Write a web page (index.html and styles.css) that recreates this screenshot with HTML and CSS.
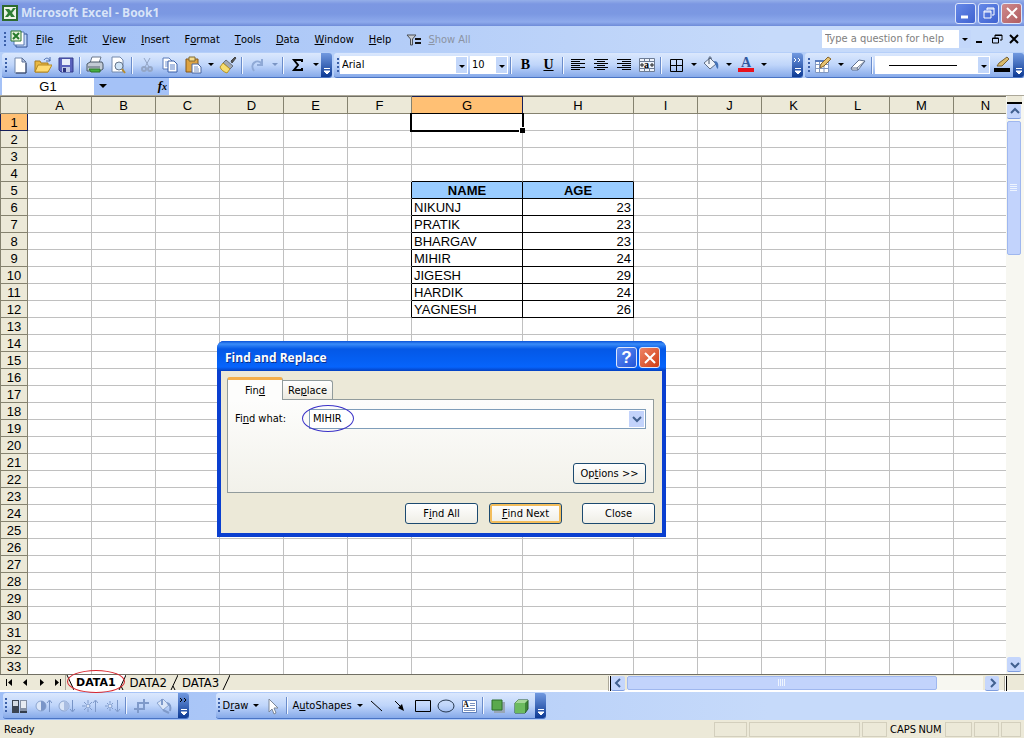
FILE: index.html
```html
<!DOCTYPE html>
<html lang="en">
<head>
	<meta charset="utf-8">
	<title>Microsoft Excel - Book1</title>
	<link rel="stylesheet" href="styles.css">
</head>

<body>
<!-- title bar -->
<div class="titlebar">
	<svg class="app-icon" width="16" height="16"><rect x="1" y="1" width="14" height="14" fill="#eef4e6" stroke="#2d6a2d" stroke-width="2"/><path d="M3 4h4l2 2 2-3h3l-4 5 3 4h-4L8 10l-2 2H3l3-4z" fill="#2f7f35"/></svg>
	<span class="title">Microsoft Excel - Book1</span>
	<button class="win" aria-label="Minimize"><svg width="18" height="18"><path d="M4 13h7" stroke="#fff" stroke-width="3"/></svg></button>
	<button class="win" aria-label="Restore"><svg width="18" height="18"><path d="M7 6V4h7v7h-2M7 5h7M4 7h7v7H4zM4 8h7" fill="none" stroke="#fff"/></svg></button>
	<button class="win win-close" aria-label="Close"><svg width="18" height="18"><path d="M4 4l10 10M14 4L4 14" stroke="#fff" stroke-width="2"/></svg></button>
</div>

<!-- menu -->
<div class="menubar">
	<span class="grip"></span>
	<svg class="book-icon" width="18" height="18"><path d="M6 4h11v13H6z" fill="#c5d9f7" stroke="#2e4f91"/><path d="M4 2h10v13H4z" fill="#fff" stroke="#5778b3"/><path d="M1 1h10v10H1z" fill="#e7f1dd" stroke="#2d762e"/><path d="M3 3l6 6M9 3L3 9" stroke="#267a2b" stroke-width="2"/></svg>
	<button class="menu"><u>F</u>ile</button>
	<button class="menu"><u>E</u>dit</button>
	<button class="menu"><u>V</u>iew</button>
	<button class="menu"><u>I</u>nsert</button>
	<button class="menu">F<u>o</u>rmat</button>
	<button class="menu"><u>T</u>ools</button>
	<button class="menu"><u>D</u>ata</button>
	<button class="menu"><u>W</u>indow</button>
	<button class="menu"><u>H</u>elp</button>
	<button class="menu showall" disabled><svg width="16" height="12"><path d="M1 1h9L6.500 5v6h-2V5z" fill="#c8cdd4" stroke="#4a4f55"/><path d="M9 5h6M9 9h6" stroke="#111" stroke-width="2"/></svg><span><u>S</u>how All</span></button>
	<div class="ask">
		<input type="text" aria-label="Help question" placeholder="Type a question for help">
		<button aria-label="Recent questions"><svg width="10" height="16"><path d="M2 7h6l-3 3z"/></svg></button>
	</div>
	<button class="doc" aria-label="Minimize workbook"><svg width="12" height="12"><path d="M2 9h6" stroke="#000" stroke-width="2"/></svg></button>
	<button class="doc" aria-label="Restore workbook"><svg width="12" height="12"><path d="M4 5V2h7v5H9M4 2.500h7M1.500 5v5h6V5zM1 5.500h7" fill="none" stroke="#000"/></svg></button>
	<button class="doc" aria-label="Close workbook"><svg width="12" height="12"><path d="M2 2l8 8M10 2l-8 8" stroke="#000" stroke-width="2"/></svg></button>
</div>

<!-- toolbars -->
<div class="toolbars">
	<div class="toolbar">
		<span class="grip"></span>
		<button class="tool" aria-label="New"><svg width="18" height="18"><path d="M4 2h7l4 4v11H4z" fill="#fff" stroke="#7288ad"/><path d="M11 2v4h4z" fill="#bccbe6" stroke="#5a6f96"/><path d="M15 7v10H5" fill="none" stroke="#2c3d60"/></svg></button>
		<button class="tool" aria-label="Open"><svg width="18" height="18"><path d="M1 5h5l1 2h7v9H1z" fill="#e9b843" stroke="#a77b1c"/><path d="M4 9h14l-4 7H1z" fill="#ffdb72" stroke="#b58a24"/><path d="M10 4c2-3 5-2 6 1M16 1v4h-4" fill="none" stroke="#4a6cae"/></svg></button>
		<button class="tool" aria-label="Save"><svg width="18" height="18"><path d="M2 2h14v14H4l-2-2z" fill="#5a62bd" stroke="#343c8c"/><path d="M5 3h8v6H5z" fill="#e7ecfa"/><path d="M5 11h8v5H5z" fill="#bfc9e8"/><path d="M6 12h3v4H6z" fill="#2c337d"/></svg></button>
		<span class="sep"></span>
		<button class="tool" aria-label="Print"><svg width="18" height="18"><path d="M6 1h9l-2 6H4z" fill="#fff" stroke="#6a788c"/><path d="M1 8l3-2h12l1 2v5l-3 2H1z" fill="#c3cbd5" stroke="#4a5868"/><path d="M2 11h12" stroke="#55606e"/><path d="M3 13h11v3H5z" fill="#45b041" stroke="#2d752b"/></svg></button>
		<button class="tool" aria-label="Print Preview"><svg width="18" height="18"><path d="M3 1h8l3 3v12H3z" fill="#fff" stroke="#7388ab"/><circle cx="10" cy="10" r="4" fill="#cfe4f7" stroke="#66758a"/><path d="M13 13l3 4" stroke="#b58b2e" stroke-width="2"/></svg></button>
		<span class="sep"></span>
		<button class="tool" aria-label="Cut"><svg width="18" height="18"><path d="M6 2l5 9M12 2l-5 9" stroke="#94a6c6"/><circle cx="6" cy="13" r="2" fill="none" stroke="#94a6c6" stroke-width="2"/><circle cx="12" cy="13" r="2" fill="none" stroke="#94a6c6" stroke-width="2"/></svg></button>
		<button class="tool" aria-label="Copy"><svg width="18" height="18"><path d="M2 2h6l3 3v8H2z" fill="#fff" stroke="#5a7ab8"/><path d="M4 6h5M4 8h5M4 10h5" stroke="#7b9ad4"/><path d="M7 5h6l3 3v8H7z" fill="#fff" stroke="#3b5fa6"/><path d="M9 9h5M9 11h5M9 13h5" stroke="#5f83c9"/></svg></button>
		<button class="tool" aria-label="Paste"><svg width="18" height="18"><path d="M2 3h12v13H2z" fill="#dda343" stroke="#85591a"/><path d="M5 1h6v4H5z" fill="#f5dc8e" stroke="#806a32"/><path d="M8 8h6l3 3v6H8z" fill="#fff" stroke="#4a67a0"/><path d="M10 11h4M10 13h5M10 15h5" stroke="#7892c4"/></svg></button>
		<button class="drop" aria-label="Paste options"><svg width="7" height="4"><path d="M1 0h6L4 3z"/></svg></button>
		<button class="tool" aria-label="Format Painter"><svg width="18" height="18"><path d="M12 5l4-4 1 1-4 5z" fill="#555" stroke="#444"/><path d="M7 4l7 6-3 3-7-6z" fill="#a1a8b4" stroke="#66707e"/><path d="M4 7l7 6-3 4c-3-1-6-3-7-6z" fill="#f7dd6e" stroke="#b49328"/></svg></button>
		<span class="sep"></span>
		<button class="tool" disabled aria-label="Redo"><svg width="18" height="18"><path d="M6 15c-5-7 3-13 8-7M14 3v6H9" fill="none" stroke="#8fa9d6" stroke-width="2"/></svg></button>
		<button class="drop" disabled aria-label="Redo list"><svg width="7" height="4"><path d="M1 0h6L4 3z" fill="#7b95c4"/></svg></button>
		<span class="sep"></span>
		<button class="tool" aria-label="AutoSum"><svg width="18" height="18"><path d="M13 6V4H5l4 5-4 5h8v-2" fill="none" stroke="#000" stroke-width="2"/></svg></button>
		<button class="drop" aria-label="AutoSum functions"><svg width="7" height="4"><path d="M1 0h6L4 3z"/></svg></button>
		<button class="more" aria-label="Toolbar options"><svg width="11" height="22"><path d="M3 14.500h6M3 17h6l-3 3z" fill="#fff" stroke="#fff"/></svg></button>
	</div>

	<div class="toolbar toolbar-format">
		<span class="grip"></span>
		<select class="font" aria-label="Font"><option>Arial</option></select>
		<select class="size" aria-label="Font size"><option>10</option></select>
		<span class="sep"></span>
		<button class="tool letter"><b>B</b></button>
		<button class="tool letter"><u>U</u></button>
		<span class="sep"></span>
		<button class="tool" aria-label="Align left"><svg width="18" height="18"><path d="M2 3.500h14M2 5.500h9M2 7.500h14M2 9.500h9M2 11.500h14M2 13.500h9" stroke="#000"/></svg></button>
		<button class="tool" aria-label="Center"><svg width="18" height="18"><path d="M2 3.500h14M5 5.500h8M2 7.500h14M5 9.500h8M2 11.500h14M5 13.500h8" stroke="#000"/></svg></button>
		<button class="tool" aria-label="Align right"><svg width="18" height="18"><path d="M2 3.500h14M7 5.500h9M2 7.500h14M7 9.500h9M2 11.500h14M7 13.500h9" stroke="#000"/></svg></button>
		<button class="tool" aria-label="Merge and center"><svg width="18" height="18"><path d="M1.500 2.500h15v13h-15zM1 5.500h16M1 12.500h16M6.500 2v3M11.500 2v3M6.500 13v3M11.500 13v3" fill="#eef3fb" stroke="#6d7c94"/><path d="M2 9h4M4 7v4M12 9h4M14 7v4" stroke="#222"/><text x="6" y="12" font-size="10" font-weight="bold" font-family="Liberation Serif">a</text></svg></button>
		<span class="sep"></span>
		<button class="tool" aria-label="Borders"><svg width="18" height="18"><path d="M3.500 3.500h12v12h-12zM9.500 3v13M3 9.500h13" fill="none" stroke="#000"/></svg></button>
		<button class="drop" aria-label="Border styles"><svg width="7" height="4"><path d="M1 0h6L4 3z"/></svg></button>
		<button class="tool" aria-label="Fill color"><svg width="18" height="18"><path d="M2 7l6-5 6 6-6 5z" fill="#edf2fa" stroke="#5f6f88"/><path d="M7 8V2c0-2 3-1 2 1" fill="none" stroke="#445268"/><path d="M12 5c4 0 5 3 4 8-2-1-2-4-3-5z" fill="#4472b8"/></svg></button>
		<button class="drop" aria-label="Fill colors"><svg width="7" height="4"><path d="M1 0h6L4 3z"/></svg></button>
		<button class="tool" aria-label="Font color"><svg width="18" height="18"><text x="4" y="11" font-size="14" font-weight="bold" fill="#31589f" font-family="Liberation Serif">A</text><path d="M1 12h16v4H1z" fill="#e8101c"/></svg></button>
		<button class="drop" aria-label="Font colors"><svg width="7" height="4"><path d="M1 0h6L4 3z"/></svg></button>
		<button class="more" aria-label="More formatting"><svg width="11" height="22"><path d="M2 4l2 2-2 2M6 4l2 2-2 2" fill="none" stroke="#fff"/><path d="M3 14.500h6M3 17h6l-3 3z" fill="#fff" stroke="#fff"/></svg></button>
	</div>

	<div class="toolbar toolbar-border">
		<span class="grip"></span>
		<button class="tool" aria-label="Draw border"><svg width="18" height="18"><path d="M1.500 4.500h13v12h-13zM1 8.500h13M1 12.500h13M5.500 4v12M10 4v12" fill="#fff" stroke="#8298c0"/><path d="M1 4h13v2H1z" fill="#587bbd"/><path d="M6 12l1-4 7-7 3 2-7 7z" fill="#e6c270" stroke="#86642a"/></svg></button>
		<button class="drop" aria-label="Draw border options"><svg width="7" height="4"><path d="M1 0h6L4 3z"/></svg></button>
		<button class="tool" aria-label="Erase border"><svg width="18" height="18"><path d="M2 12l8-8 6 1-7 9H3z" fill="#fff" stroke="#5f6f8c"/><path d="M2 12h6l8-7M8 12l1 2" fill="none" stroke="#5f6f8c"/></svg></button>
		<span class="sep"></span>
		<select class="line" aria-label="Line style"><option>&nbsp;</option></select>
		<button class="tool" aria-label="Line color"><svg width="18" height="18"><path d="M4 10l2-3 8-6 2 2-7 7z" fill="#d9ba6a" stroke="#7a6234"/><path d="M1 12h16v4H1z"/></svg></button>
		<button class="more" aria-label="More border tools"><svg width="11" height="22"><path d="M3 14.500h6M3 17h6l-3 3z" fill="#fff" stroke="#fff"/></svg></button>
	</div>
</div>

<!-- formula bar -->
<div class="formulabar">
	<input class="namebox" type="text" aria-label="Name box" value="G1">
	<div class="fx">
		<button aria-label="Named cells"><svg width="9" height="5"><path d="M1 0h8L5 4z"/></svg></button>
		<button class="fx-btn" aria-label="Insert function"><i>f<small>x</small></i></button>
	</div>
	<input class="formula" type="text" aria-label="Formula">
</div>

<!-- worksheet -->
<div class="work">
	<div class="sheet">
		<table class="grid" id="grid"></table>
	</div>
	<div class="vscroll">
		<span class="split"></span>
		<button class="arrow" aria-label="Scroll up"><svg width="13" height="13"><path d="M3 8l4-4 4 4" fill="none" stroke="#41608f" stroke-width="2"/></svg></button>
		<div class="thumb"><svg width="8" height="8"><path d="M0 .5h7M0 2.500h7M0 4.500h7M0 6.500h7" stroke="#eef4fe"/></svg></div>
		<button class="arrow last" aria-label="Scroll down"><svg width="13" height="13"><path d="M3 5l4 4 4-4" fill="none" stroke="#41608f" stroke-width="2"/></svg></button>
	</div>
</div>

<div class="tabstrip">
	<div class="nav">
		<button aria-label="First sheet"><svg width="9" height="9"><path d="M1 1h1v7H1zM7 1v7L3 4.500z"/></svg></button>
		<button aria-label="Previous sheet"><svg width="9" height="9"><path d="M6 1v7L2 4.500z"/></svg></button>
		<button aria-label="Next sheet"><svg width="9" height="9"><path d="M3 1v7l4-3.500z"/></svg></button>
		<button aria-label="Last sheet"><svg width="9" height="9"><path d="M2 1v7l4-3.500zM7 1h1v7H7z"/></svg></button>
	</div>
	<svg class="slant" width="8" height="15"><path d="M1 0h7v15z" fill="#fff"/><path d="M1 0l7 15" stroke="#000"/></svg>
	<button class="sheettab current">DATA1</button>
	<svg class="slant" width="8" height="15"><path d="M0 0h8L1 15H0z" fill="#fff"/><path d="M8 0L1 15M3 11l2 4" stroke="#000"/></svg>
	<button class="sheettab">DATA2</button>
	<svg class="slant" width="8" height="15"><path d="M8 0L1 15M3 11l2 4" stroke="#000"/></svg>
	<button class="sheettab">DATA3</button>
	<svg class="slant" width="8" height="15"><path d="M8 0L1 15" stroke="#000"/></svg>
	<div class="hscroll">
		<span class="vsplit"></span>
		<button class="arrow" aria-label="Scroll left"><svg width="13" height="13"><path d="M8 3L4 7l4 4" fill="none" stroke="#41608f" stroke-width="2"/></svg></button>
		<div class="track"><div class="thumb"><svg width="8" height="8"><path d="M.5 0v7M2.500 0v7M4.500 0v7M6.500 0v7" stroke="#eef4fe"/></svg></div></div>
		<button class="arrow" aria-label="Scroll right"><svg width="13" height="13"><path d="M5 3l4 4-4 4" fill="none" stroke="#41608f" stroke-width="2"/></svg></button>
		<span class="vsplit end"></span>
	</div>
	<span class="mark mark-tab"></span>
</div>

<!-- picture and drawing toolbars -->
<div class="drawbars">
	<div class="toolbar">
		<span class="grip"></span>
		<button class="tool" aria-label="Color"><svg width="18" height="18"><path d="M1 3h7v13H1z" fill="#3b4453"/><path d="M2 4h5v5H2z" fill="#d5dbe4"/><path d="M9 3h7v13H9z" fill="#8591a5"/><path d="M10 4h5v7h-5z" fill="#e8ecf2"/><path d="M9 14h7v2H9z" fill="#333d4d"/></svg></button>
		<button class="tool" disabled aria-label="More contrast"><svg width="18" height="18"><circle cx="7" cy="9" r="5" fill="#dbe6f8" stroke="#8ba4cf"/><path d="M7 4a5 5 0 0 1 0 10z" fill="#7995c8"/><path d="M15.500 15V4M13 6l2.500-3L18 6" fill="none" stroke="#7794c7"/></svg></button>
		<button class="tool" disabled aria-label="Less contrast"><svg width="18" height="18"><circle cx="7" cy="9" r="5" fill="#dbe6f8" stroke="#8ba4cf"/><path d="M7 4a5 5 0 0 1 0 10z" fill="#a9bde2"/><path d="M15.500 3v11M13 12l2.500 3 2.500-3" fill="none" stroke="#7794c7"/></svg></button>
		<button class="tool" disabled aria-label="More brightness"><svg width="18" height="18"><circle cx="8" cy="9" r="2" fill="#dbe6f8" stroke="#7f9aca"/><path d="M8 3v3M8 12v3M2 9h3M4 5l2 2M4 13l2-2M12 13l-2-2M12 5l-2 2M15.500 15V4M13 6l2.500-3L18 6" fill="none" stroke="#7f9aca"/></svg></button>
		<button class="tool" disabled aria-label="Less brightness"><svg width="18" height="18"><circle cx="7" cy="9" r="2" fill="#dbe6f8" stroke="#7f9aca"/><path d="M7 4v2M7 12v2M2 9h2M4 6l1 1M4 12l1-1M10 12l-1-1M10 6L9 7M14.500 3v11M12 12l2.500 3 2.500-3" fill="none" stroke="#7f9aca"/></svg></button>
		<span class="sep"></span>
		<button class="tool" disabled aria-label="Crop"><svg width="18" height="18"><path d="M6 16V6h11M2 12h10V2" fill="none" stroke="#7f9aca" stroke-width="2"/></svg></button>
		<button class="tool" disabled aria-label="Format picture"><svg width="18" height="18"><path d="M2 6l6-4 6 6-6 5z" fill="#dbe6f8" stroke="#8ba4cf"/><path d="M7 8V2M12 6c3 1 4 4 3 8M8 13l6 3" fill="none" stroke="#7f9aca" stroke-width="2"/></svg></button>
		<button class="more" aria-label="More picture tools"><svg width="11" height="22"><path d="M2 3l2 2-2 2M6 3l2 2-2 2" fill="none" stroke="#000"/><path d="M3 14.500h6M3 17h6l-3 3z" fill="#fff" stroke="#fff"/></svg></button>
	</div>
	<div class="toolbar toolbar-draw">
		<span class="grip"></span>
		<button class="wordtool draw"><span>D<u>r</u>aw</span><svg width="7" height="4"><path d="M1 0h6L4 3z"/></svg></button>
		<button class="tool" aria-label="Select objects"><svg width="18" height="18"><path d="M5 2v13l3-3 2 5 2-1-2-5h4z" fill="#fff" stroke="#7a8698"/></svg></button>
		<span class="sep"></span>
		<button class="wordtool shapes"><span>A<u>u</u>toShapes</span><svg width="7" height="4"><path d="M1 0h6L4 3z"/></svg></button>
		<button class="tool" aria-label="Line"><svg width="18" height="18"><path d="M3 4l11 10" stroke="#000"/></svg></button>
		<button class="tool" aria-label="Arrow"><svg width="18" height="18"><path d="M4 4l7 7" stroke="#000"/><path d="M13 14L7 11l4-4z"/></svg></button>
		<button class="tool" aria-label="Rectangle"><svg width="18" height="18"><path d="M1.500 3.500h15v11h-15z" fill="none" stroke="#000"/></svg></button>
		<button class="tool" aria-label="Oval"><svg width="18" height="18"><ellipse cx="9" cy="9" rx="8" ry="6" fill="none" stroke="#26384f"/></svg></button>
		<button class="tool" aria-label="Text box"><svg width="18" height="18"><path d="M2.500 3.500h14v12h-14z" fill="#fff" stroke="#5e80bd"/><path d="M10 6.500h5M10 8.500h5M4 11.500h11M4 13.500h11" stroke="#7890bd"/><text x="3" y="10" font-size="8" font-weight="bold" font-family="Liberation Serif">A</text></svg></button>
		<span class="sep"></span>
		<button class="tool" aria-label="Shadow"><svg width="18" height="18"><path d="M5 5h11v11H5z" fill="#98a6b6"/><path d="M3 3h10v10H3z" fill="#5aa94d" stroke="#2c6e2a"/></svg></button>
		<button class="tool" aria-label="3-D"><svg width="18" height="18"><path d="M3 6l3-3h10v9l-3 4H3z" fill="#3d8638" stroke="#275a25"/><path d="M3 6h10v10H3z" fill="#6cbb5f"/><path d="M3 6l3-3h10l-3 3z" fill="#a6d89a"/></svg></button>
		<button class="more" aria-label="More drawing tools"><svg width="11" height="22"><path d="M3 14.500h6M3 17h6l-3 3z" fill="#fff" stroke="#fff"/></svg></button>
	</div>
</div>

<div class="status">
	<span class="ready">Ready</span>
	<span class="pane wide"></span>
	<span class="pane message"></span>
	<span class="pane"></span>
	<span class="pane key">CAPS</span>
	<span class="pane key">NUM</span>
	<span class="pane scrl"></span>
	<span class="pane"></span>
	<span class="pane corner"></span>
</div>

<!-- find dialog -->
<div class="dialog" role="dialog" aria-labelledby="dlg-title">
	<div class="dlg-title">
		<span id="dlg-title">Find and Replace</span>
		<button class="win help" aria-label="Help">?</button>
		<button class="win red" aria-label="Close dialog"><svg width="18" height="18"><path d="M4 4l10 10M14 4L4 14" stroke="#fff" stroke-width="2"/></svg></button>
	</div>
	<div class="dlg-body">
		<div class="dlg-tabs">
			<button class="dlg-tab on">Fin<u>d</u></button>
			<button class="dlg-tab">Re<u>p</u>lace</button>
		</div>
		<div class="panel">
			<div class="field">
				<label for="what">Fi<u>n</u>d what:</label>
				<div class="combo">
					<input id="what" type="text" value="MIHIR">
					<button aria-label="Recent searches"><svg width="13" height="14"><path d="M3 5l4 4 4-4" fill="none" stroke="#41608f" stroke-width="2"/></svg></button>
					<span class="mark mark-find"></span>
				</div>
			</div>
			<button class="btn">Op<u>t</u>ions &gt;&gt;</button>
		</div>
		<div class="actions">
			<button class="btn">F<u>i</u>nd All</button>
			<button class="btn default"><u>F</u>ind Next</button>
			<button class="btn close">Close</button>
		</div>
	</div>
</div>

<script src="sheet.js"></script>
</body>
</html>
```
FILE: styles.css
```css
* {box-sizing: border-box}
html, body {height: 100%}
body {margin: 0; display: flex; flex-direction: column; overflow: hidden; background: #ece9d8; color: #000; font: 11px/14px "DejaVu Sans Condensed", "Noto Sans", sans-serif}
button, input, select {margin: 0; padding: 0; border: 0; border-radius: 0; background: none; color: inherit; font: inherit}
button {display: flex; align-items: center; justify-content: center; white-space: nowrap}
svg {display: block; flex: none}

/* title bar */
.titlebar {flex: none; display: flex; align-items: center; gap: 2px; height: 26px; padding: 0 2px; background: linear-gradient(#95afe9 0, #7c97e2 4px, #7b98e2 14px, #8eaaec 22px, #6e8bd8)}
.title {flex: 1; color: #d8e4f8; font: bold 12px/18px "Open Sans", sans-serif}
.app-icon {margin-right: 1px}
.win {width: 21px; height: 21px; border: 1px solid #dde6fb; border-radius: 3px; background: linear-gradient(135deg, #6689e8, #3f62d0)}
.win-close {background: linear-gradient(135deg, #cf8a8c, #b05c60)}

/* menu */
.menubar {flex: none; display: flex; align-items: center; height: 26px; padding: 0 2px 0 4px; background: linear-gradient(90deg, #a0bff6, #c6dafa 75%)}
.grip {flex: none; width: 3px; height: 15px; background: repeating-linear-gradient(#3a5fa8 0, #3a5fa8 2px, transparent 2px, transparent 4px) 0 0 / 2px 100% no-repeat}
.book-icon {margin: 0 0 0 3px}
.menu {padding: 1px 7px 0 8px; height: 20px}
.showall {gap: 6px; color: #8b93a3}
.ask {display: flex; width: 149px; height: 18px; margin-left: auto; background: #fff}
.ask input {flex: 1; min-width: 0; padding-left: 3px}
.ask input::placeholder {color: #808080; opacity: 1}
.ask button {width: 12px; background: #c3d7fa}
.doc {width: 17px; height: 18px}

/* toolbars */
.toolbars {flex: none; display: flex; gap: 2px; height: 26px; padding: 1px 0 0 2px; background: #b5cff9}
.toolbar {display: flex; align-items: center; height: 25px; padding-left: 3px; border-bottom: 1px solid #4a74c4; border-radius: 3px; background: linear-gradient(#dbe8fd, #bfd5fa 50%, #86a9e9)}
.toolbar-format {width: 469px}
.toolbar-border {flex: 1}
.tool {flex: none; width: 23px; height: 22px}
.drop {flex: none; width: 12px; height: 22px}
.sep {flex: none; width: 6px; height: 17px; background: linear-gradient(90deg, transparent 2px, #6a8ccb 2px, #6a8ccb 3px, #f1f6ff 3px, #f1f6ff 4px, transparent 4px)}
.more {flex: none; width: 11px; height: 24px; margin-left: auto; border-radius: 0 3px 3px 0; background: linear-gradient(#7199e0, #0d3a94)}
.letter {font: bold 14px/18px "Liberation Serif", serif}
.toolbar select {height: 18px; padding-left: 2px; appearance: none; background: #fff url("data:image/svg+xml,%3Csvg xmlns='http://www.w3.org/2000/svg' width='11' height='16'%3E%3Cpath d='M0 0h11v16H0z' fill='%23c3d7fa'/%3E%3Cpath d='M3 8h6l-3 3z'/%3E%3C/svg%3E") right 1px center no-repeat}
.toolbar .font {width: 128px; margin-right: 2px}
.toolbar .size {width: 38px}
.toolbar .line {flex: 1; min-width: 0; background-image: url("data:image/svg+xml,%3Csvg xmlns='http://www.w3.org/2000/svg' width='11' height='16'%3E%3Cpath d='M0 0h11v16H0z' fill='%23c3d7fa'/%3E%3Cpath d='M3 8h6l-3 3z'/%3E%3C/svg%3E"), linear-gradient(#000, #000); background-position: right 1px center, 14px 9px; background-size: auto, 68px 1px; background-repeat: no-repeat}

/* formula bar */
.formulabar {flex: none; display: flex; height: 17px; padding-left: 2px; background: #a5c2f7}
.formulabar input {font: 13px/16px "Liberation Sans", sans-serif; background: #fff}
.namebox {width: 92px; text-align: center}
.fx {display: flex; justify-content: space-between; width: 75px; padding: 0 2px 0 4px}
.fx-btn {font: bold 13px/14px "Liberation Serif", serif}
.fx-btn small {font-size: 10px}
.formula {flex: 1; min-width: 0}

/* worksheet */
.work {flex: 1; min-height: 0; display: flex; border-top: 1px solid #aca899}
.sheet {flex: 1; min-width: 0; overflow: hidden; background: #fff}
.grid {width: 1018px; table-layout: fixed; border-collapse: separate; border-spacing: 0; font: 13px/14px "Liberation Sans", sans-serif}
.grid th, .grid td {height: 17px; padding: 2px 2px 0; border: solid #c0c0c0; border-width: 0 1px 1px 0; overflow: hidden; white-space: nowrap}
.grid th {padding: 2px 0 0; border-color: #85826f; background: #ece9d8; font-weight: normal; text-align: center}
.grid thead th {height: 18px; border-top: 1px solid #716f64}
.grid .rowhead {border-left: 1px solid #85826f}
.grid .picked {border-color: #151f5a; background: #ffc074}
.grid .num {text-align: right}
.grid .head {background: #99ccff; font-weight: bold; text-align: center}
.grid .line-r {border-right-color: #000}
.grid .line-b {border-bottom-color: #000}
.grid .active {position: relative; overflow: visible}
.cursor {position: absolute; inset: -1px -2px -2px; border: 2px solid #000; border-top-width: 1px}
.cursor::after {content: ""; position: absolute; right: -3px; bottom: -3px; width: 5px; height: 5px; border: solid #fff; border-width: 1px 0 0 1px; background: #000}

/* scroll bars */
.vscroll {flex: none; display: flex; flex-direction: column; width: 18px; padding: 0 2px 2px 1px; background: #f7f7f1}
.split {height: 8px; border-bottom: 2px solid #000; background: #ece9d8}
.arrow {flex: none; width: 14px; height: 15px; border-radius: 2px; background: #c5d6fc; border-bottom: 1px solid #7f9ddd}
.last {margin-top: auto}
.thumb {display: flex; align-items: center; justify-content: center; border: 1px solid #9fb7ef; border-radius: 2px; background: #c2d3fc}
.vscroll .thumb {width: 14px; height: 134px; margin-top: 2px}
.hscroll {display: flex; align-items: center; flex: 0 0 416px; height: 16px; margin-left: auto}
.track {flex: 1; margin: 0 2px; background: #f7f7f1}
.track .thumb {width: 310px; height: 14px}
.vsplit {flex: none; width: 3px; height: 15px; border-right: 1px solid #000; border-left: 1px solid #aca899; background: #fff}
.end {margin: 0 17px 0 5px}

/* sheet tabs */
.tabstrip {flex: none; position: relative; display: flex; align-items: flex-start; height: 18px; border-top: 1px solid #716f64; border-bottom: 2px solid #fff}
.nav {display: flex; width: 66px; height: 15px; padding-left: 1px; border-right: 1px solid #aca899}
.nav button {flex: 1}
.sheettab {height: 15px; padding: 0 2px 0 3px; font-size: 13px}
.sheettab.current {padding: 0 2px; background: #fff; font: bold 11px/14px "DejaVu Sans", sans-serif}
.slant + .sheettab:not(.current) {padding-left: 4px; padding-right: 3px}
.mark {position: absolute; border: 1px solid #d8262e; border-radius: 50%; pointer-events: none}
.mark-tab {left: 67px; top: -5px; width: 58px; height: 23px}

.drawbars {flex: none; display: flex; gap: 27px; height: 28px; padding: 1px 3px; background: linear-gradient(90deg, #a0bff6, #c6dafa 75%)}
.drawbars .toolbar {height: 26px; padding-left: 2px}
.drawbars .more {height: 25px; margin-left: 3px}
.wordtool {gap: 4px; height: 22px}
.draw {width: 40px}
.shapes {width: 75px}

/* status bar */
.status {flex: none; display: flex; align-items: center; gap: 2px; height: 18px; padding: 0 3px 0 4px}
.ready {flex: 1; padding-top: 1px}
.pane {width: 25px; height: 15px; border: 1px solid #d3cfbd; text-align: center}
.key {width: 26px; border-color: transparent}
.wide {width: 33px}
.message {width: 111px}
.scrl {width: 27px}
.corner {width: 20px}

/* find dialog */
.dialog {position: absolute; left: 217px; top: 341px; width: 449px; border: solid #0a3fd0; border-width: 0 4px 4px; border-radius: 7px 7px 0 0; background: #0a3fd0}
.dlg-title {display: flex; align-items: center; gap: 2px; height: 30px; margin: 0 -4px; padding: 3px 6px 0 8px; border-radius: 7px 7px 0 0; background: linear-gradient(#0a52d8 0, #3a8cf8 3px, #0558e6 8px, #0560f4 20px, #0664fc 26px, #0440c0)}
.dlg-title span {flex: 1; color: #fff; font: bold 12px/18px "Open Sans", sans-serif; text-shadow: 1px 1px #0a2f8a}
.help {background: linear-gradient(135deg, #5c8cf5, #2454d8); color: #fff; font: bold 17px/18px "Liberation Sans", sans-serif}
.red {background: linear-gradient(135deg, #ee8466, #d03c14)}
.dlg-body {padding: 7px 8px 9px 6px; background: #ece9d8}
.dlg-tabs {display: flex; align-items: flex-end; height: 21px}
.dlg-tab {height: 19px; padding: 2px 5px 0; border: 1px solid #919b9c; border-bottom: 0; border-left: 0; border-radius: 0 3px 0 0; background: linear-gradient(#fff, #eceae0)}
.dlg-tab.on {position: relative; width: 56px; height: 23px; margin-bottom: -1px; border-left: 1px solid #919b9c; border-top: 3px solid #f4b04b; border-radius: 3px 3px 0 0; background: #fdfdfc}
.panel {display: flex; flex-direction: column; align-items: flex-end; justify-content: space-between; height: 94px; padding: 9px 7px 8px; border: 1px solid #919b9c; background: linear-gradient(#fdfdfc, #f2f1ea)}
.field {display: flex; align-items: center; justify-content: space-between; width: 100%}
.combo {position: relative; display: flex; width: 337px; height: 20px; padding: 1px; border: 1px solid #7f9db9; background: #fff}
.combo input {flex: 1; min-width: 0; padding-left: 2px}
.combo button {width: 15px; background: #c3d3fb}
.mark-find {left: -8px; top: -5px; width: 52px; height: 27px; border-color: #3b32c8}
.actions {display: flex; justify-content: flex-end; gap: 11px; margin: 10px -1px 0 0}
.btn {width: 73px; height: 21px; border: 1px solid #1c4a70; border-radius: 3px; background: linear-gradient(#fff, #efeee6)}
.default {box-shadow: inset 0 0 0 2px #f3bd5b}
.close {margin-left: 9px}
```
FILE: sheet.js
```js
var cols = 'ABCDEFGHIJKLMN'.split('');
var people = [['NAME', 'AGE'], ['NIKUNJ', 23], ['PRATIK', 23], ['BHARGAV', 23], ['MIHIR', 24], ['JIGESH', 29], ['HARDIK', 24], ['YAGNESH', 26]];
var first = 5, last = first + people.length - 1;

var html = '<colgroup><col style="width:28px">';
cols.forEach(function (c) {
	html += '<col style="width:' + (c == 'G' || c == 'H' ? 111 : 64) + 'px">';
});
html += '</colgroup><thead><tr><th class="rowhead"></th>';
cols.forEach(function (c) {
	html += '<th' + (c == 'G' ? ' class="picked"' : '') + '>' + c + '</th>';
});
html += '</tr></thead><tbody>';

for (var r = 1; r <= 33; r++) {
	html += '<tr><th class="rowhead' + (r == 1 ? ' picked' : '') + '">' + r + '</th>';
	cols.forEach(function (c, i) {
		var cls = [], text = '';
		var inRows = r >= first && r <= last;
		// table starts in column G
		if (inRows && i >= 6 && i <= 7) {
			text = people[r - first][i - 6];
			if (r == first) cls.push('head');
			else if (i == 7) cls.push('num');
		}
		if (inRows && i >= 5 && i <= 7) cls.push('line-r');
		if (r >= first - 1 && r <= last && i >= 6 && i <= 7) cls.push('line-b');
		if (r == 1 && c == 'G') {
			cls.push('active');
			text = '<span class="cursor"></span>';
		}
		html += '<td class="' + cls.join(' ') + '">' + text + '</td>';
	});
	html += '</tr>';
}
document.getElementById('grid').innerHTML = html + '</tbody>';
```
